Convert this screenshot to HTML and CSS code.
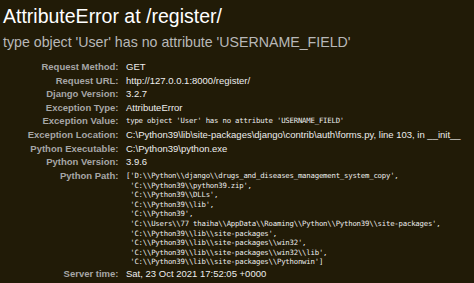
FILE: index.html
```html
<!DOCTYPE html>
<html>
<head>
<meta charset="utf-8">
<link rel="stylesheet" href="styles.css">
</head>
<body>
<div class="summary">
  <h1 class="title">AttributeError at /register/</h1>
  <p class="subtitle">type object 'User' has no attribute 'USERNAME_FIELD'</p>
  <div class="meta">
    <div class="label">Request Method:</div><div class="value">GET</div>
    <div class="label">Request URL:</div><div class="value">http://127.0.0.1:8000/register/</div>
    <div class="label">Django Version:</div><div class="value">3.2.7</div>
    <div class="label">Exception Type:</div><div class="value">AttributeError</div>
    <div class="label">Exception Value:</div><div class="value"><pre class="code">type object 'User' has no attribute 'USERNAME_FIELD'</pre></div>
    <div class="label">Exception Location:</div><div class="value">C:\Python39\lib\site-packages\django\contrib\auth\forms.py, line 103, in __init__</div>
    <div class="label">Python Executable:</div><div class="value">C:\Python39\python.exe</div>
    <div class="label">Python Version:</div><div class="value">3.9.6</div>
    <div class="label">Python Path:</div><div class="value"><pre class="code path">['D:\\Python\\django\\drugs_and_diseases_management_system_copy',
 'C:\\Python39\\python39.zip',
 'C:\\Python39\\DLLs',
 'C:\\Python39\\lib',
 'C:\\Python39',
 'C:\\Users\\77 thaiha\\AppData\\Roaming\\Python\\Python39\\site-packages',
 'C:\\Python39\\lib\\site-packages',
 'C:\\Python39\\lib\\site-packages\\win32',
 'C:\\Python39\\lib\\site-packages\\win32\\lib',
 'C:\\Python39\\lib\\site-packages\\Pythonwin']</pre></div>
    <div class="label">Server time:</div><div class="value">Sat, 23 Oct 2021 17:52:05 +0000</div>
  </div>
</div>
</body>
</html>
```
FILE: styles.css
```css
html, body {
  margin: 0;
  padding: 0;
  background: #211b07;
}
body {
  font-family: "Liberation Sans", Arial, sans-serif;
  color: #eeeeee;
}
.summary {
  padding: 5px 0 0 3px;
}
.title {
  margin: 0;
  font-size: 19.5px;
  line-height: 22px;
  font-weight: normal;
  color: #ffffff;
}
.subtitle {
  margin: 7px 0 0 0;
  font-size: 14.2px;
  line-height: 16px;
  color: #b8b8b8;
}
.meta {
  margin-top: 10px;
  display: grid;
  grid-template-columns: 115.5px auto;
  column-gap: 7.5px;
  justify-content: start;
}
.label {
  text-align: right;
  font-weight: bold;
  font-size: 9.5px;
  line-height: 13.6px;
  color: #a6a6a6;
  white-space: nowrap;
}
.value {
  font-size: 9.5px;
  line-height: 13.6px;
  color: #ededed;
  white-space: nowrap;
}
.code {
  margin: 0;
  font-family: "DejaVu Sans Mono", monospace;
  font-size: 7.3px;
  letter-spacing: -0.2px;
  line-height: 13.6px;
  color: #ededed;
}
.path {
  line-height: 9.55px;
  padding-top: 2.5px;
}
```
